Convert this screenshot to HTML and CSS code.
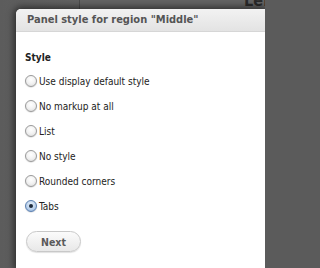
FILE: index.html
```html
<!DOCTYPE html>
<html>
<head>
<meta charset="utf-8">
<link rel="stylesheet" href="styles.css">
</head>
<body>
<div class="page">
  <div class="page-col"></div>
  <div class="page-col page-col-right"><span class="page-title">Left</span></div>
</div>
<div class="dialog">
  <div class="dialog-title">Panel style for region "Middle"</div>
  <div class="dialog-body">
    <div class="field-label">Style</div>
    <ul class="options">
      <li class="option"><span class="radio"></span><span class="option-text">Use display default style</span></li>
      <li class="option"><span class="radio"></span><span class="option-text">No markup at all</span></li>
      <li class="option"><span class="radio"></span><span class="option-text">List</span></li>
      <li class="option"><span class="radio"></span><span class="option-text">No style</span></li>
      <li class="option"><span class="radio"></span><span class="option-text">Rounded corners</span></li>
      <li class="option"><span class="radio radio-checked"></span><span class="option-text">Tabs</span></li>
    </ul>
    <button class="btn">Next</button>
  </div>
</div>
</body>
</html>
```
FILE: styles.css
```css
html, body {
  margin: 0;
  padding: 0;
  width: 265px;
  height: 268px;
  overflow: hidden;
}
body {
  background: #5b5b5b;
  font-family: "DejaVu Sans Condensed", "DejaVu Sans", "Liberation Sans", sans-serif;
  position: relative;
}
.page {
  display: flex;
  height: 268px;
}
.page-col {
  width: 79px;
  background: linear-gradient(to right, #5c5c5c, #626262);
  border-right: 1px solid #4c4c4c;
}
.page-col-right {
  flex: 1;
  border-right: 0;
  background: #646464;
  position: relative;
  overflow: hidden;
}
.page-title {
  position: absolute;
  left: 164px;
  top: -9px;
  font-size: 16px;
  font-weight: bold;
  color: #2a2a2a;
}
.dialog {
  position: absolute;
  left: 16px;
  top: 9px;
  right: 0;
  bottom: 0;
  background: #fff;
  border-radius: 5px 0 0 0;
  box-shadow: 0 0 7px 2px rgba(0, 0, 0, 0.55);
}
.dialog-title {
  height: 22px;
  padding-left: 11px;
  background: linear-gradient(to bottom, #f2f2f2, #e3e3e3);
  border-bottom: 1px solid #d6d6d6;
  border-radius: 5px 0 0 0;
  font-size: 11px;
  font-weight: bold;
  line-height: 22px;
  color: #555;
  white-space: nowrap;
}
.dialog-body {
  padding: 19px 0 0 9px;
}
.field-label {
  font-size: 10px;
  font-weight: bold;
  color: #222;
  line-height: 14px;
  margin-bottom: 9px;
}
.options {
  list-style: none;
  margin: 0;
  padding: 0;
  display: flex;
  flex-direction: column;
  gap: 11px;
}
.option {
  display: flex;
  align-items: center;
  height: 14px;
}
.radio {
  width: 12px;
  height: 12px;
  box-sizing: border-box;
  border-radius: 50%;
  border: 1px solid #9a9a9a;
  background: radial-gradient(circle at 50% 35%, #ffffff 0%, #f2f2f2 50%, #d8d8d8 100%);
  box-shadow: 0 0.5px 1px rgba(0, 0, 0, 0.2);
  margin-right: 2px;
  position: relative;
}
.radio-checked {
  border-color: #5a7fb0;
  background: radial-gradient(circle at 50% 35%, #e6f0fb 0%, #b8cfea 60%, #7fa3d2 100%);
}
.radio-checked::after {
  content: "";
  position: absolute;
  left: 3px;
  top: 3px;
  width: 4px;
  height: 4px;
  border-radius: 50%;
  background: #1c2a3c;
}
.option-text {
  font-size: 10px;
  color: #222;
  white-space: nowrap;
}
.btn {
  display: block;
  margin-top: 18px;
  margin-left: 1px;
  width: 55px;
  height: 21px;
  border: 1px solid #c8c8c8;
  border-radius: 11px;
  background: linear-gradient(to bottom, #fbfbfb, #e8e8e8);
  box-shadow: 0 1px 1px rgba(0, 0, 0, 0.12);
  font-family: "DejaVu Sans Condensed", "DejaVu Sans", "Liberation Sans", sans-serif;
  font-size: 10.5px;
  font-weight: bold;
  color: #5a5a5a;
  padding: 0;
}
```
